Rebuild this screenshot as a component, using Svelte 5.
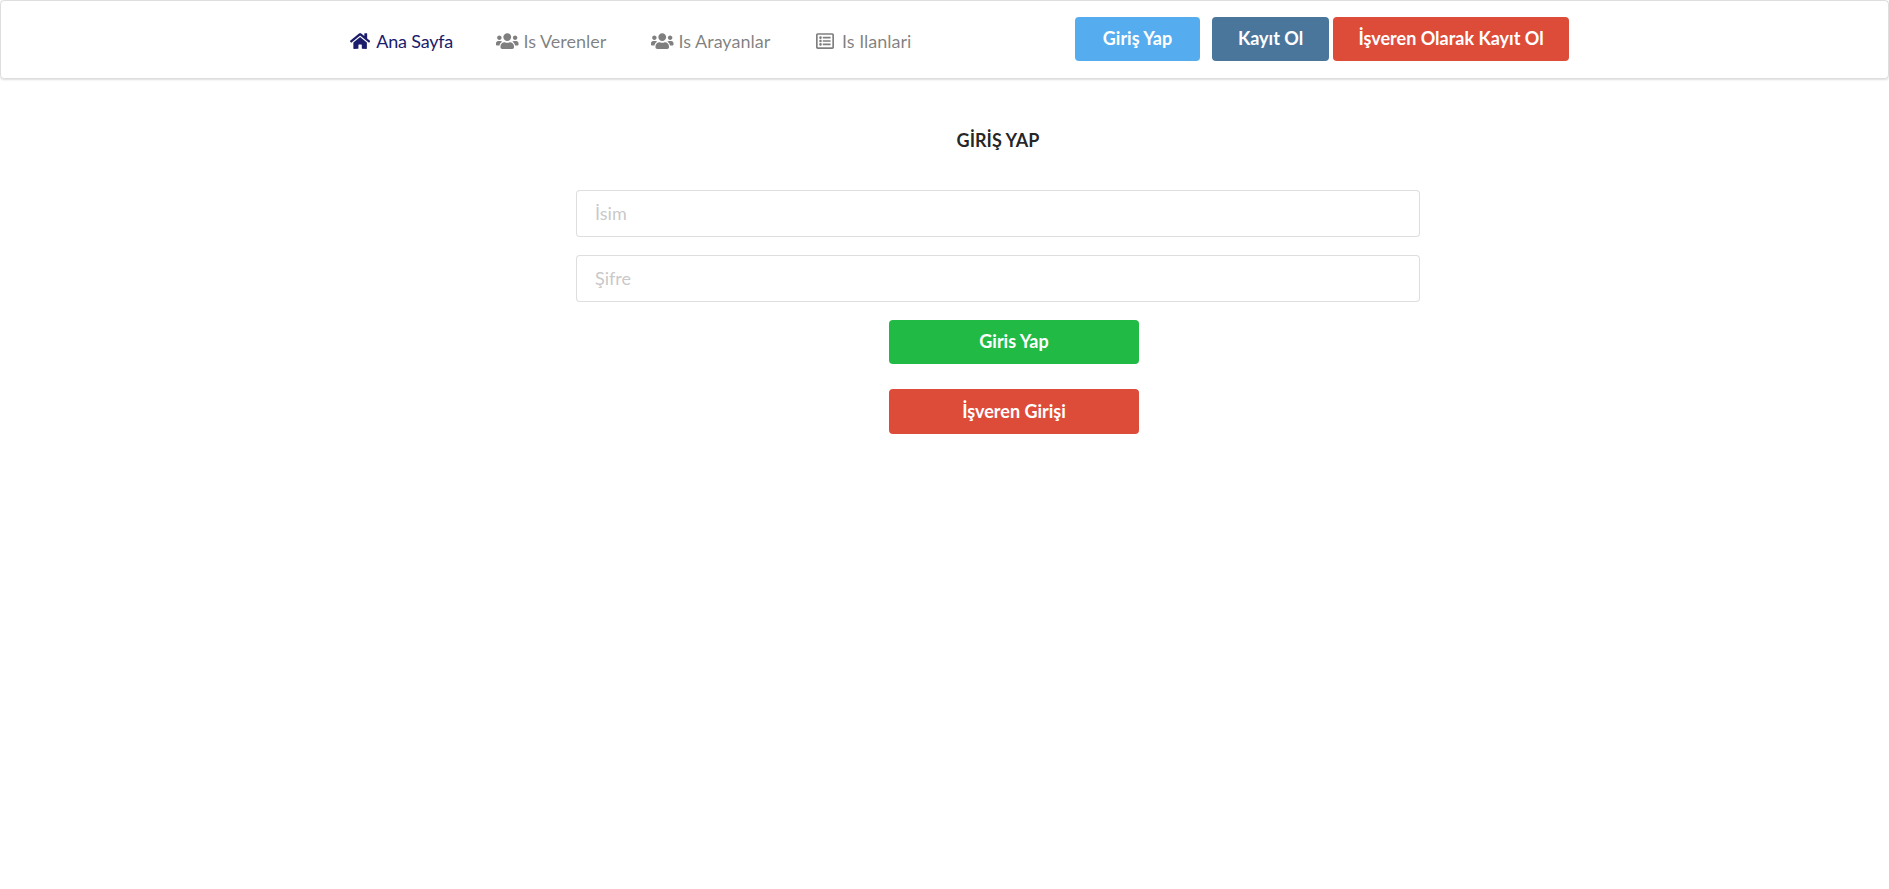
<script>
  const links = [
    { label: 'Ana Sayfa', icon: 'home', active: true },
    { label: 'Is Verenler', icon: 'users' },
    { label: 'Is Arayanlar', icon: 'users' },
    { label: 'Is Ilanlari', icon: 'list' }
  ];

  const icons = {
    home: {
      box: '0 0 576 512',
      d: 'M280.37 148.26L96 300.11V464a16 16 0 0 0 16 16l112.06-.29a16 16 0 0 0 15.92-16V368a16 16 0 0 1 16-16h64a16 16 0 0 1 16 16v95.64a16 16 0 0 0 16 16.05L464 480a16 16 0 0 0 16-16V300L295.67 148.26a12.19 12.19 0 0 0-15.3 0zM571.6 251.47L488 182.56V44.05a12 12 0 0 0-12-12h-56a12 12 0 0 0-12 12v72.61L318.47 43a48 48 0 0 0-61 0L4.34 251.47a12 12 0 0 0-1.6 16.9l25.5 31A12 12 0 0 0 45.15 301l235.22-193.74a12.19 12.19 0 0 1 15.3 0L530.9 301a12 12 0 0 0 16.9-1.6l25.5-31a12 12 0 0 0-1.7-16.93z'
    },
    users: {
      box: '0 0 640 512',
      d: 'M96 224c35.3 0 64-28.7 64-64s-28.7-64-64-64-64 28.7-64 64 28.7 64 64 64zm448 0c35.3 0 64-28.7 64-64s-28.7-64-64-64-64 28.7-64 64 28.7 64 64 64zm32 32h-64c-17.6 0-33.5 7.1-45.1 18.6 40.3 22.1 68.9 62 75.1 109.4h66c17.7 0 32-14.3 32-32v-32c0-35.3-28.7-64-64-64zm-256 0c61.9 0 112-50.1 112-112S381.9 32 320 32 208 82.1 208 144s50.1 112 112 112zm76.8 32h-8.3c-20.8 10-43.9 16-68.5 16s-47.6-6-68.5-16h-8.3C179.6 288 128 339.6 128 403.2V432c0 26.5 21.5 48 48 48h288c26.5 0 48-21.5 48-48v-28.8c0-63.6-51.6-115.2-115.2-115.2zm-223.7-13.4C161.5 263.1 145.6 256 128 256H64c-35.3 0-64 28.7-64 64v32c0 17.7 14.3 32 32 32h65.9c6.3-47.4 34.9-87.3 75.2-109.4z'
    },
    list: {
      box: '0 0 512 512',
      d: 'M464 32H48C21.49 32 0 53.49 0 80v352c0 26.51 21.49 48 48 48h416c26.51 0 48-21.49 48-48V80c0-26.51-21.49-48-48-48zm-6 400H54a6 6 0 0 1-6-6V86a6 6 0 0 1 6-6h404a6 6 0 0 1 6 6v340a6 6 0 0 1-6 6zm-42-92v24c0 6.627-5.373 12-12 12H204c-6.627 0-12-5.373-12-12v-24c0-6.627 5.373-12 12-12h200c6.627 0 12 5.373 12 12zm0-96v24c0 6.627-5.373 12-12 12H204c-6.627 0-12-5.373-12-12v-24c0-6.627 5.373-12 12-12h200c6.627 0 12 5.373 12 12zm0-96v24c0 6.627-5.373 12-12 12H204c-6.627 0-12-5.373-12-12v-24c0-6.627 5.373-12 12-12h200c6.627 0 12 5.373 12 12zm-252 12c0 19.882-16.118 36-36 36s-36-16.118-36-36 16.118-36 36-36 36 16.118 36 36zm0 96c0 19.882-16.118 36-36 36s-36-16.118-36-36 16.118-36 36-36 36 16.118 36 36zm0 96c0 19.882-16.118 36-36 36s-36-16.118-36-36 16.118-36 36-36 36 16.118 36 36z'
    }
  };
</script>

<div class="page">
  <header class="menu">
    <nav class="links">
      {#each links as link}
        <a class="link {link.icon}" class:active={link.active} href="#top">
          <svg viewBox={icons[link.icon].box} aria-hidden="true"><path d={icons[link.icon].d} /></svg>
          {link.label}
        </a>
      {/each}
    </nav>
    <div class="actions">
      <button class="btn twitter">Giriş Yap</button>
      <button class="btn linkedin">Kayıt Ol</button>
      <button class="btn google">İşveren Olarak Kayıt Ol</button>
    </div>
  </header>

  <main class="login">
    <h3>GİRİŞ YAP</h3>
    <form on:submit|preventDefault>
      <input type="text" placeholder="İsim" />
      <input type="password" placeholder="Şifre" />
      <div class="form-buttons">
        <button class="btn green wide" type="submit">Giris Yap</button>
        <button class="btn google wide red" type="button">İşveren Girişi</button>
      </div>
    </form>
  </main>
</div>

<style>
  :global(body) { margin: 0; background: #fff; }
  .page { font-family: Lato, "Helvetica Neue", Arial, sans-serif; font-size: 18px; color: rgba(0, 0, 0, .87); }

  .menu {
    display: flex; align-items: center; height: 79px; box-sizing: border-box;
    padding-left: 348px; border: 1px solid rgba(34, 36, 38, .15); border-radius: 4px;
    box-shadow: 0 1px 2px rgba(34, 36, 38, .15);
  }
  .links { display: flex; align-items: center; width: 726px; margin-top: 3px; }
  .link { display: flex; align-items: center; color: rgba(0, 0, 0, .5); text-decoration: none; line-height: 1; }
  .link svg { height: 18px; fill: currentColor; margin-right: 5px; }
  .link.home { color: #1b1c6b; width: 147px; letter-spacing: -.2px; padding-left: 1px; box-sizing: border-box; }
  .link.home svg { margin-right: 6px; }
  .link.users:nth-child(2) { width: 155px; }
  .link.users:nth-child(3) { width: 165px; }
  .link.list svg { width: 18px; margin-right: 8px; }

  .actions { display: flex; gap: 4px; margin-bottom: 1px; }
  .btn {
    height: 44px; border: 0; border-radius: 4px; color: #fff; font: 700 18px Lato, sans-serif;
    padding: 0 0 2px; cursor: pointer;
  }
  .twitter { background: #55acee; width: 125px; margin-right: 8px; }
  .linkedin { background: #4a769c; width: 117px; }
  .google { background: #dd4b39; width: 236px; }
  .green { background: #21ba45; }

  .login { width: 844px; margin-left: 576px; }
  h3 { margin: 0; padding-top: 51px; height: 60px; text-align: center; font-size: 18px; font-weight: 700; line-height: 20px; color: rgba(0, 0, 0, .87); }
  form { display: flex; flex-direction: column; }
  input {
    height: 47px; box-sizing: border-box; margin-bottom: 18px; padding: 0 18px 2px;
    border: 1px solid rgba(34, 36, 38, .15); border-radius: 4px; outline: 0;
    font: 400 18px Lato, sans-serif;
  }
  input::placeholder { color: rgba(191, 191, 191, .87); }
  .form-buttons { display: flex; flex-direction: column; gap: 25px; width: 250px; margin-left: 313px; }
  .btn.wide { width: 250px; height: 44px; }
  .btn.wide.red { height: 45px; }
</style>
